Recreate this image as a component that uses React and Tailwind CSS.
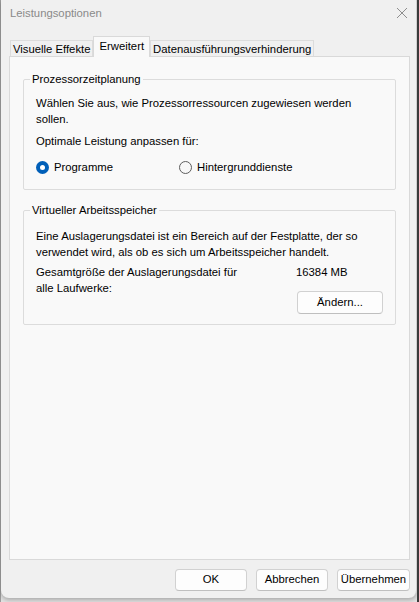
const font = { fontFamily: '"Liberation Sans", Arial, sans-serif' };

function Radio({ checked, label, className = '' }) {
  return (
    <label className={`flex items-center gap-[5px] ${className}`}>
      {checked ? (
        <span className="flex h-[13px] w-[13px] items-center justify-center rounded-full bg-[#005fb8]">
          <span className="h-[5px] w-[5px] rounded-full bg-white" />
        </span>
      ) : (
        <span className="h-[13px] w-[13px] rounded-full border border-[#5d5d5d] bg-[#f7f7f7]" />
      )}
      <span>{label}</span>
    </label>
  );
}

function GroupBox({ title, children, className = '' }) {
  return (
    <fieldset className={`rounded-[2px] border border-[#dcdcdc] px-[12px] ${className}`}>
      <legend className="-ml-[6px] px-[2px] leading-[16px]">{title}</legend>
      {children}
    </fieldset>
  );
}

function DlgButton({ children, className = '' }) {
  return (
    <button className={`h-[22px] rounded-[4px] border border-[#d1d1d1] border-b-[#bfbfbf] bg-[#fdfdfd] text-[11.3px] leading-none text-black ${className}`}>
      {children}
    </button>
  );
}

export default function App() {
  const tabs = ['Visuelle Effekte', 'Erweitert', 'Datenausführungsverhinderung'];
  const active = 1;

  return (
    <div className="flex h-[602px] w-[419px] bg-[#e2e2e2]" style={font}>
      <div className="w-px bg-[#9d9d9d]" />
      <div className="flex h-[598px] w-[416px] flex-col rounded-b-[8px] border-r border-[#cfcfcf] bg-[#f0f0f0] text-[11.3px] leading-[16px] text-black shadow-[0_2px_4px_rgba(0,0,0,0.25)]">
        {/* title bar */}
        <div className="flex h-[36px] items-start justify-between pl-[9px] pr-[8px] pt-[5px]">
          <span className="text-[#8a8a8a]">Leistungsoptionen</span>
          <svg width="12" height="12" viewBox="0 0 12 12" className="mt-[2px]">
            <path d="M1 1L11 11M11 1L1 11" stroke="#8e8e8e" strokeWidth="1" fill="none" />
          </svg>
        </div>

        {/* tab strip */}
        <div className="relative z-10 ml-[9px] flex h-[20px] items-end">
          {tabs.map((t, i) =>
            i === active ? (
              <div
                key={t}
                className="-mb-px flex h-[21px] items-start border border-b-0 border-[#d9d9d9] bg-[#f9f9f9] px-[5px] pt-[1px]"
              >
                {t}
              </div>
            ) : (
              <div
                key={t}
                className="flex h-[16px] items-center border border-b-0 border-[#dcdcdc] bg-[#f0f0f0] px-[2px]"
              >
                {t}
              </div>
            )
          )}
        </div>

        {/* tab page */}
        <div className="ml-[8px] flex h-[504px] w-[401px] flex-col border border-[#d9d9d9] bg-[#f9f9f9] px-[13px] pt-[14px]">
          <GroupBox title="Prozessorzeitplanung" className="pb-[14px]">
            <p className="pt-[8px]">
              Wählen Sie aus, wie Prozessorressourcen zugewiesen werden sollen.
            </p>
            <p className="mt-[6px]">Optimale Leistung anpassen für:</p>
            <div className="mt-[10px] flex">
              <Radio checked label="Programme" className="w-[143px]" />
              <Radio label="Hintergrunddienste" />
            </div>
          </GroupBox>

          <GroupBox title="Virtueller Arbeitsspeicher" className="mt-[12px] pb-[10px]">
            <p className="pt-[10px]">
              Eine Auslagerungsdatei ist ein Bereich auf der Festplatte, der so verwendet wird, als ob es sich um Arbeitsspeicher handelt.
            </p>
            <div className="mt-[4px] flex justify-between">
              <p className="w-[212px]">Gesamtgröße der Auslagerungsdatei für alle Laufwerke:</p>
              <div className="flex w-[86px] flex-col">
                <span className="-ml-px">16384 MB</span>
                <DlgButton className="mt-[11px] h-[23px] w-[86px]">Ändern...</DlgButton>
              </div>
            </div>
          </GroupBox>
        </div>

        {/* dialog buttons */}
        <div className="flex justify-end gap-[9px] pr-[6px] pt-[9px]">
          <DlgButton className="w-[72px]">OK</DlgButton>
          <DlgButton className="w-[72px]">Abbrechen</DlgButton>
          <DlgButton className="w-[73px]">Übernehmen</DlgButton>
        </div>
      </div>
      <div className="w-[2px] bg-[#3a3a3a]" />
    </div>
  );
}
